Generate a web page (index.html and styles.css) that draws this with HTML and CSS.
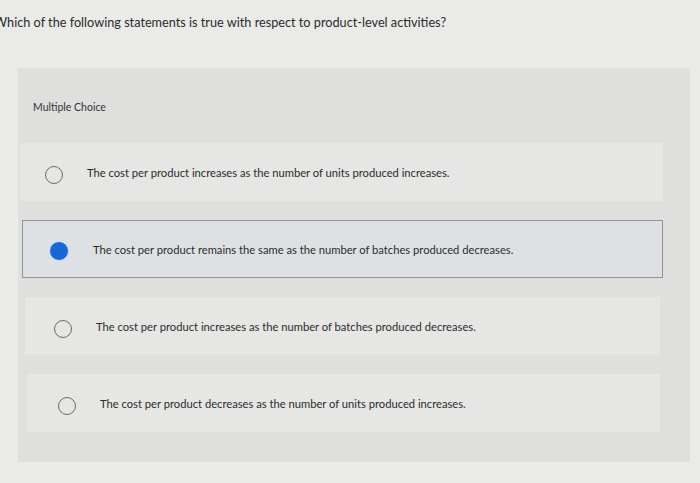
FILE: index.html
```html
<!DOCTYPE html>
<html>
<head>
<meta charset="utf-8">
<link rel="stylesheet" href="styles.css">
</head>
<body>
<div class="question">Which of the following statements is true with respect to product-level activities?</div>
<div class="panel">
  <div class="label">Multiple Choice</div>
  <div class="options">
    <div class="option opt1"><span class="radio"></span><span class="text">The cost per product increases as the number of units produced increases.</span></div>
    <div class="option selected opt2"><span class="radio"></span><span class="text">The cost per product remains the same as the number of batches produced decreases.</span></div>
    <div class="option opt3"><span class="radio"></span><span class="text">The cost per product increases as the number of batches produced decreases.</span></div>
    <div class="option opt4"><span class="radio"></span><span class="text">The cost per product decreases as the number of units produced increases.</span></div>
  </div>
</div>
</body>
</html>
```
FILE: styles.css
```css
html, body {
  margin: 0;
  padding: 0;
}
body {
  width: 700px;
  height: 483px;
  overflow: hidden;
  background: #eaeae8;
  font-family: Lato, "Open Sans", sans-serif;
  color: #2e2e2e;
}
.question {
  margin: 14px 0 0 -6px;
  font-size: 12.7px;
  line-height: 16px;
  white-space: nowrap;
  color: #2a2a2a;
}
.panel {
  margin: 38px 10px 0 18px;
  height: 394px;
  background: #dfdfdd;
  padding: 31px 27px 0 2px;
  box-sizing: border-box;
}
.label {
  font-size: 10.5px;
  line-height: 16px;
  margin-left: 13px;
  color: #333;
}
.options {
  margin-top: 28px;
  display: flex;
  flex-direction: column;
  gap: 19px;
}
.option {
  height: 58px;
  background: #e6e6e4;
  display: flex;
  align-items: center;
  box-sizing: border-box;
  padding-left: 25px;
}
.opt2 { margin-left: 2px; padding-left: 26px; }
.opt3 { margin-left: 5px; padding-left: 29px; margin-right: 3px; }
.opt4 { margin-left: 7px; padding-left: 31px; margin-right: 3px; }
.option.selected {
  background: #dee1e3;
  border: 1px solid #8e9397;
}
.radio {
  width: 18px;
  height: 18px;
  border-radius: 50%;
  border: 1.5px solid #6a6a6a;
  box-sizing: border-box;
  flex: none;
  margin-top: 6px;
}
.selected .radio {
  width: 20px;
  height: 20px;
  background: #1668d6;
  border: 1.5px solid #d6e2f0;
  margin-top: 4px;
}
.text {
  margin-left: 24px;
  font-size: 11.2px;
  color: #2c2c2c;
  white-space: nowrap;
}
```
